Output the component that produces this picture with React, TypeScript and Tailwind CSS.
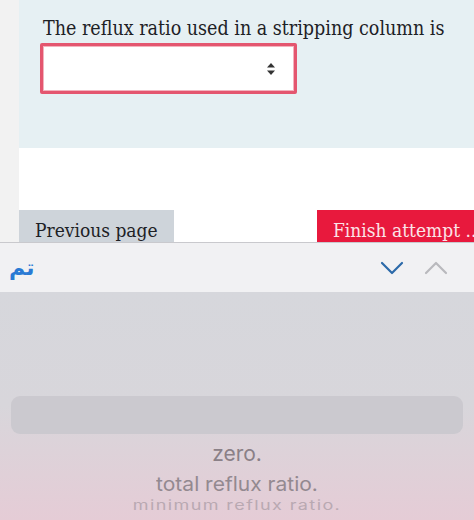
import React from "react";

const slab = { fontFamily: "'DejaVu Serif Condensed', 'DejaVu Serif', serif" };
const ios = { fontFamily: "Inter, 'Noto Sans', sans-serif" };

function SortIcon() {
  return (
    <svg width="10" height="14" viewBox="0 0 10 14" className="text-[#333]">
      <path d="M5 1 L9 5.5 H1 Z" fill="currentColor" />
      <path d="M5 13 L9 8.5 H1 Z" fill="currentColor" />
    </svg>
  );
}

function Chevron({ up, color }: { up?: boolean; color: string }) {
  return (
    <svg width="24" height="14" viewBox="0 0 24 14" fill="none" stroke={color} strokeWidth="2.2" strokeLinecap="round" strokeLinejoin="round">
      {up ? <path d="M2 12 L12 2 L22 12" /> : <path d="M2 2 L12 12 L22 2" />}
    </svg>
  );
}

export default function App() {
  return (
    <div className="w-[474px] h-[520px] overflow-hidden flex flex-col bg-white">
      {/* page behind the keyboard */}
      <div className="h-[242px] overflow-hidden flex shrink-0">
        <div className="w-[19px] shrink-0 bg-[#f2f2f2]" />
        <div className="flex-1 flex flex-col">
          <div className="h-[148px] bg-[#e6f0f3] pl-[24px] pt-[14px] text-[#1d2125]" style={slab}>
            <p className="text-[19.5px] leading-[30px] whitespace-nowrap">
              The reflux ratio used in a stripping column is
            </p>
            <div className="-ml-[3px] -mt-[1px] w-[257px] h-[51px] border-[3px] border-[#e4566f] rounded-[2px] bg-white shadow-[inset_0_0_0_1px_#f3b3be] flex items-center justify-end pr-[18px]">
              <SortIcon />
            </div>
          </div>
          <div className="flex-1 flex items-end justify-between">
            <div className="w-[155px] h-[32px] bg-[#ced4da] pl-[16px] pt-[8px] text-[19px] leading-[24px] text-[#1d2125] whitespace-nowrap" style={slab}>
              Previous page
            </div>
            <div className="w-[157px] h-[32px] bg-[#e8193d] pl-[16px] pt-[8px] text-[19px] leading-[24px] text-[#fbe3e7] whitespace-nowrap overflow-hidden" style={slab}>
              Finish attempt ...
            </div>
          </div>
        </div>
      </div>

      {/* keyboard toolbar */}
      <div className="h-[50px] shrink-0 bg-[#f1f1f3] border-t border-[#c9c9cd] flex items-center justify-between pl-[9px] pr-[26px]">
        <span className="text-[22px] font-semibold text-[#2a7ad4] leading-none" style={{ fontFamily: "'DejaVu Sans', 'Noto Sans', sans-serif" }} dir="rtl">
          تم
        </span>
        <div className="flex items-center gap-[20px]">
          <Chevron color="#2c6aa9" />
          <Chevron up color="#b9b9bd" />
        </div>
      </div>

      {/* picker wheel */}
      <div className="flex-1 bg-gradient-to-b from-[#d6d7dc] via-[#d8d6db] to-[#e5ccd6] flex flex-col items-center pt-[104px] px-[11px]" style={ios}>
        <div className="w-full h-[38px] rounded-[9px] bg-[#cbc9cf]" />
        <div className="mt-[5px] text-[21px] leading-[30px] text-[#8a8087]">zero.</div>
        <div className="text-[21px] leading-[30px] text-[#938990] scale-y-[0.93]">total reflux ratio.</div>
        <div className="-mt-[5px] text-[18px] leading-[22px] text-[#b9a9b2] tracking-[1.4px] scale-y-[0.75]">minimum reflux ratio.</div>
      </div>
    </div>
  );
}
